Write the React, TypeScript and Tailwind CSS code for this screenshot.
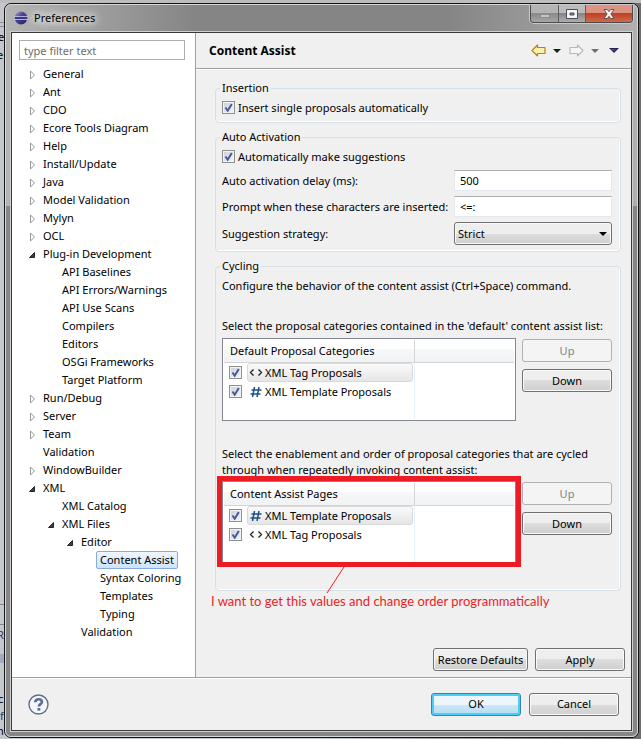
import { useState } from "react";
import type { ReactNode } from "react";
import clsx from "clsx";

type NodeState = "closed" | "open" | "leaf";

interface TreeNode {
  label: string;
  level: 0 | 1 | 2 | 3;
  state: NodeState;
}

const indents = ["pl-[14px]", "pl-[33px]", "pl-[52px]", "pl-[71px]"];

const tree: TreeNode[] = [
  { label: "General", level: 0, state: "closed" },
  { label: "Ant", level: 0, state: "closed" },
  { label: "CDO", level: 0, state: "closed" },
  { label: "Ecore Tools Diagram", level: 0, state: "closed" },
  { label: "Help", level: 0, state: "closed" },
  { label: "Install/Update", level: 0, state: "closed" },
  { label: "Java", level: 0, state: "closed" },
  { label: "Model Validation", level: 0, state: "closed" },
  { label: "Mylyn", level: 0, state: "closed" },
  { label: "OCL", level: 0, state: "closed" },
  { label: "Plug-in Development", level: 0, state: "open" },
  { label: "API Baselines", level: 1, state: "leaf" },
  { label: "API Errors/Warnings", level: 1, state: "leaf" },
  { label: "API Use Scans", level: 1, state: "leaf" },
  { label: "Compilers", level: 1, state: "leaf" },
  { label: "Editors", level: 1, state: "leaf" },
  { label: "OSGi Frameworks", level: 1, state: "leaf" },
  { label: "Target Platform", level: 1, state: "leaf" },
  { label: "Run/Debug", level: 0, state: "closed" },
  { label: "Server", level: 0, state: "closed" },
  { label: "Team", level: 0, state: "closed" },
  { label: "Validation", level: 0, state: "leaf" },
  { label: "WindowBuilder", level: 0, state: "closed" },
  { label: "XML", level: 0, state: "open" },
  { label: "XML Catalog", level: 1, state: "leaf" },
  { label: "XML Files", level: 1, state: "open" },
  { label: "Editor", level: 2, state: "open" },
  { label: "Content Assist", level: 3, state: "leaf" },
  { label: "Syntax Coloring", level: 3, state: "leaf" },
  { label: "Templates", level: 3, state: "leaf" },
  { label: "Typing", level: 3, state: "leaf" },
  { label: "Validation", level: 2, state: "leaf" },
];

const Twisty = ({ state }: { state: NodeState }) => (
  <svg className="w-3 h-3 mt-0.5 shrink-0" viewBox="0 0 12 12">
    {state === "closed" && (
      <path d="M4.5 2v8l4-4z" fill="#fff" stroke="#989898" />
    )}
    {state === "open" && (
      <path d="M8.5 3.5v5h-5z" fill="#404040" stroke="#262626" />
    )}
  </svg>
);

const Tree = () => {
  const [selected, setSelected] = useState(27);
  return (
    <ul className="mt-[5px]">
      {tree.map((node, i) => (
        <li key={i} className={clsx("flex items-center h-[18px]", indents[node.level])}>
          <Twisty state={node.state} />
          <button
            type="button"
            onClick={() => setSelected(i)}
            className={clsx(
              "ml-px h-[18px] px-[3px] border rounded-[2px] leading-4 whitespace-nowrap",
              i === selected
                ? "border-[#84acdd] bg-linear-to-b from-[#eff6fe] to-[#cfe3fb]"
                : "border-transparent"
            )}
          >
            {node.label}
          </button>
        </li>
      ))}
    </ul>
  );
};

const CheckBox = ({ id }: { id: string }) => (
  <span className="grid w-[13px] h-[13px] shrink-0">
    <input
      id={id}
      type="checkbox"
      defaultChecked
      className="peer col-start-1 row-start-1 appearance-none w-[13px] h-[13px] border border-[#8e8f8f] bg-linear-to-br from-[#cbcfd5] to-[#f6f6f6] shadow-[inset_0_0_0_1px_#f4f4f4]"
    />
    <svg
      className="col-start-1 row-start-1 pointer-events-none invisible peer-checked:visible"
      viewBox="0 0 13 13"
    >
      <path d="M3.5 6.5l2.2 3.2L9.8 3" fill="none" stroke="#44599a" strokeWidth="2" />
    </svg>
  </span>
);

const buttonBase =
  "h-[23px] border rounded-[3px] leading-4 text-center whitespace-nowrap";

const PushButton = ({
  children,
  className = "w-[90px]",
  disabled = false,
  primary = false,
}: {
  children: ReactNode;
  className?: string;
  disabled?: boolean;
  primary?: boolean;
}) => (
  <button
    type="button"
    disabled={disabled}
    className={clsx(
      buttonBase,
      className,
      disabled && "border-[#adb2b5] bg-[#f4f4f4] text-[#838383]",
      primary &&
        "border-[#3c7fb1] shadow-[inset_0_0_0_2px_#46d0f8] bg-linear-to-b from-[#ecf6fc] from-50% via-[#cfe8f8] via-50% to-[#b4dcf3]",
      !disabled &&
        !primary &&
        "border-[#707070] shadow-[inset_0_0_0_1px_#fafafa] bg-linear-to-b from-[#eeeeee] from-50% via-[#dddddd] via-50% to-[#cfcfcf]"
    )}
  >
    {children}
  </button>
);

const Group = ({ title, children }: { title: string; children: ReactNode }) => (
  <fieldset className="min-w-0 border border-[#d5dfe5] rounded-[4px] pl-1.5 pr-2 pb-1.5 shadow-[inset_0_-1px_0_#fff,inset_-1px_0_0_#fff]">
    <legend className="-ml-0.5 px-0.5 leading-4 bg-[#f0f0f0]">{title}</legend>
    {children}
  </fieldset>
);

const TagIcon = () => (
  <svg className="w-[14px] h-3 shrink-0" viewBox="0 0 14 12">
    <path
      d="M4.500 2.500L1.500 5.500l3 3M9.500 2.500l3 3-3 3"
      fill="none"
      stroke="#1c1c14"
      strokeWidth="1.3"
    />
  </svg>
);

const HashIcon = () => (
  <svg className="w-[14px] h-3 shrink-0" viewBox="0 0 14 12">
    <path
      d="M5.500 1L3.500 11M10 1L8 11M2.500 4h10M1.500 8h10"
      fill="none"
      stroke="#1d5288"
      strokeWidth="1.5"
    />
  </svg>
);

type Proposal = "tag" | "template";

const proposalNames = {
  tag: "XML Tag Proposals",
  template: "XML Template Proposals",
};

const ProposalTable = ({ title, rows }: { title: string; rows: Proposal[] }) => (
  <div className="border border-[#828790] bg-white p-px">
    <table className="w-full table-fixed border-separate border-spacing-0">
      <thead>
        <tr className="h-[23px]">
          <th className="w-[191px] p-0 pl-[6px] text-left font-normal border-b border-r border-[#d5d5d5] bg-linear-to-b from-white from-40% via-[#f7f8fa] via-40% to-[#f1f2f4]">
            {title}
          </th>
          <th
            aria-label="Details"
            className="p-0 border-b border-[#d5d5d5] bg-linear-to-b from-white from-40% via-[#f7f8fa] via-40% to-[#f1f2f4]"
          />
        </tr>
      </thead>
      <tbody>
        {rows.map((row, i) => (
          <tr key={row} className="h-[19px]">
            <td className="p-0 border-r border-[#e6f0fa]">
              <div className="flex items-center gap-[5px] pl-[5px] pr-px">
                <CheckBox id={`${title}-${row}`} />
                <label
                  htmlFor={`${title}-${row}`}
                  className={clsx(
                    "flex flex-1 items-center gap-0.5 h-[19px] border rounded-[3px] pl-px whitespace-nowrap",
                    i === 0
                      ? "border-[#d9d9d9] bg-linear-to-b from-[#fafafa] to-[#e6e6e6]"
                      : "border-transparent"
                  )}
                >
                  {row === "tag" ? <TagIcon /> : <HashIcon />}
                  {proposalNames[row]}
                </label>
              </div>
            </td>
            <td className="p-0" />
          </tr>
        ))}
        <tr className="h-[18px]">
          <td className="p-0 border-r border-[#e6f0fa]" />
          <td className="p-0" />
        </tr>
      </tbody>
    </table>
  </div>
);

const OrderButtons = () => (
  <div className="flex flex-col gap-[7px] pt-px">
    <PushButton disabled>Up</PushButton>
    <PushButton>Down</PushButton>
  </div>
);

const EclipseLogo = () => (
  <svg className="w-[14px] h-[14px]" viewBox="0 0 14 14">
    <defs>
      <linearGradient id="ball" x1="0" y1="0" x2="1" y2="1">
        <stop offset="0" stopColor="#b9a9dc" />
        <stop offset="0.4" stopColor="#4a4694" />
        <stop offset="1" stopColor="#211a55" />
      </linearGradient>
    </defs>
    <circle cx="7" cy="7" r="6.4" fill="url(#ball)" />
    <path d="M0 5.500h14M0 8.500h14" stroke="#c9cdf0" strokeWidth="0.8" />
    <path d="M1 7h12" stroke="#3b3786" strokeWidth="2" />
  </svg>
);

const TitleBar = () => (
  <div className="flex h-[26px] items-start">
    <div className="flex items-center gap-[6px] pl-[4px] pt-[4px]">
      <EclipseLogo />
      <h1 className="leading-[18px] [text-shadow:0_0_8px_#fff,0_0_8px_#fff,0_0_12px_#fff]">
        Preferences
      </h1>
    </div>
    <div className="ml-auto flex h-[18px] rounded-b-[4px] border border-t-0 border-[#4c4c4c] overflow-hidden shadow-[0_0_0_1px_#c8c8c8]">
      <button
        type="button"
        aria-label="Minimize"
        className="flex w-[28px] items-center justify-center border-r border-[#5c5c5c] bg-linear-to-b from-[#b4b4b4] from-50% via-[#8a8a8a] via-50% to-[#a6a6a6]"
      >
        <svg className="w-3 h-3" viewBox="0 0 12 12">
          <rect x="1.5" y="6.5" width="9" height="3" fill="#c6c6c6" stroke="#8a8a8a" />
        </svg>
      </button>
      <button
        type="button"
        aria-label="Maximize"
        className="flex w-[27px] items-center justify-center border-r border-[#5c5c5c] bg-linear-to-b from-[#bcbcbc] from-50% via-[#868686] via-50% to-[#aeaeae]"
      >
        <svg className="w-3 h-3" viewBox="0 0 12 12">
          <path
            d="M.5 1.5h11v9H.5zM4 5h4v2H4z"
            fill="#f4f4f4"
            fillRule="evenodd"
            stroke="#4a4d5c"
          />
        </svg>
      </button>
      <button
        type="button"
        aria-label="Close"
        className="flex w-[46px] items-center justify-center bg-linear-to-b from-[#dd9484] from-45% via-[#bd3a1f] via-45% to-[#d2694b]"
      >
        <svg className="w-3 h-3" viewBox="0 0 12 12">
          <path
            d="M1 1.5h3.3L6 3.7l1.7-2.2H11L7.9 6l3.1 4.5H7.7L6 8.3l-1.7 2.2H1L4.1 6z"
            fill="#f6f6f6"
            stroke="#5a4a52"
            strokeWidth="0.9"
          />
        </svg>
      </button>
    </div>
  </div>
);

const Caret = ({ className }: { className: string }) => (
  <svg className={clsx("w-2 h-1", className)} viewBox="0 0 8 4">
    <path d="M0 0h8L4 4z" fill="currentColor" />
  </svg>
);

const PageHeader = () => (
  <div className="flex h-[36px] items-center border-b border-[#a0a0a0] pl-[13px] pr-3 shadow-[0_1px_0_#fff]">
    <h2 className="font-bold text-[12px]">Content Assist</h2>
    <div className="ml-auto flex items-center">
      <button type="button" aria-label="Back">
        <svg className="w-[15px] h-[13px]" viewBox="0 0 15 13">
          <path
            d="M1 6.500L6.500 1v2.500h7.500v6H6.500V12z"
            fill="#fdf0a8"
            stroke="#b98114"
            strokeWidth="1.2"
            strokeLinejoin="round"
          />
        </svg>
      </button>
      <button type="button" aria-label="Back history" className="ml-[7px]">
        <Caret className="text-[#1c1c1c]" />
      </button>
      <button type="button" aria-label="Forward" className="ml-[8px]">
        <svg className="w-[15px] h-[13px]" viewBox="0 0 15 13">
          <path
            d="M14 6.500L8.500 1v2.500H1v6h7.500V12z"
            fill="#f5f5f1"
            stroke="#b9b9b4"
            strokeWidth="1.2"
            strokeLinejoin="round"
          />
        </svg>
      </button>
      <button type="button" aria-label="Forward history" className="ml-[7px]">
        <Caret className="text-[#707070]" />
      </button>
      <button type="button" aria-label="View menu" className="ml-[10px]">
        <svg className="w-[10px] h-[5px]" viewBox="0 0 10 5">
          <path d="M0 0h10L5 5z" fill="#26264e" />
          <path d="M2 1h5L4.5 3.5z" fill="#4a4494" />
        </svg>
      </button>
    </div>
  </div>
);

const textField =
  "h-[21px] w-full min-w-0 bg-white border border-[#e3e9ef] border-t-[#abadb3] pl-[5px] leading-4";

const ContentAssistPage = () => (
  <div className="flex flex-1 min-w-0 flex-col">
    <PageHeader />
    <div className="flex flex-1 flex-col gap-1.5 pt-[11px] pl-[19px] pr-[10px]">
      <Group title="Insertion">
        <div className="flex items-center gap-[3px] h-[17px] mt-[3px]">
          <CheckBox id="insert-single" />
          <label htmlFor="insert-single">Insert single proposals automatically</label>
        </div>
      </Group>

      <Group title="Auto Activation">
        <div className="flex items-center gap-[3px] h-[17px] mt-[3px]">
          <CheckBox id="auto-suggest" />
          <label htmlFor="auto-suggest">Automatically make suggestions</label>
        </div>
        <div className="grid grid-cols-[232px_1fr] items-center gap-y-[5px] mt-[5px]">
          <label htmlFor="delay">Auto activation delay (ms):</label>
          <input id="delay" type="text" defaultValue="500" className={textField} />
          <label htmlFor="prompt" className="whitespace-nowrap">
            Prompt when these characters are inserted:
          </label>
          <input id="prompt" type="text" defaultValue="<=:" className={textField} />
          <label htmlFor="strategy">Suggestion strategy:</label>
          <div className="relative">
            <select
              id="strategy"
              className="block w-full h-[23px] appearance-none border border-[#707070] rounded-[3px] pl-[3px] leading-4 shadow-[inset_0_0_0_1px_#fafafa] bg-linear-to-b from-[#eeeeee] from-50% via-[#dddddd] via-50% to-[#cfcfcf]"
            >
              <option>Strict</option>
            </select>
            <Caret className="absolute right-[5px] top-[10px] pointer-events-none text-black" />
          </div>
        </div>
      </Group>

      <Group title="Cycling">
        <p className="mt-1 whitespace-nowrap">
          Configure the behavior of the content assist (Ctrl+Space) command.
        </p>
        <p className="mt-6 whitespace-nowrap">
          Select the proposal categories contained in the 'default' content assist list:
        </p>
        <div className="mt-1 flex gap-1.5">
          <div className="flex-1 min-w-0">
            <ProposalTable title="Default Proposal Categories" rows={["tag", "template"]} />
          </div>
          <OrderButtons />
        </div>
        <p className="mt-[25px] whitespace-nowrap">
          Select the enablement and order of proposal categories that are cycled
          <br />
          through when repeatedly invoking content assist:
        </p>
        <div className="mt-[3px] mb-5 flex gap-1.5">
          <div className="relative flex-1 min-w-0">
            <ProposalTable title="Content Assist Pages" rows={["template", "tag"]} />
            <div className="absolute -top-[5px] -bottom-[3px] -inset-x-[5px] border-[5px] border-[#ed1c24] pointer-events-none" />
            <svg
              className="absolute left-[104px] top-full mt-[3px] w-[20px] h-[27px]"
              viewBox="0 0 20 27"
            >
              <path d="M18 0L1 26" stroke="#ed1c24" fill="none" />
            </svg>
          </div>
          <OrderButtons />
        </div>
      </Group>

      <p className="-mt-1 -ml-1 font-[Lato,sans-serif] text-[13px] leading-4 text-[#ed1c24] whitespace-nowrap">
        I want to get this values and change order programmatically
      </p>
    </div>
    <div className="flex justify-end gap-[7px] pr-1.5 pb-1.5">
      <PushButton className="w-[95px]">Restore Defaults</PushButton>
      <PushButton>Apply</PushButton>
    </div>
  </div>
);

const Footer = () => (
  <div className="flex items-center h-[53px] border-t border-[#a0a0a0] pl-[16px] pr-[12px] shadow-[inset_0_1px_0_#fff]">
    <button type="button" aria-label="Help">
      <svg className="w-[21px] h-[21px]" viewBox="0 0 21 21">
        <circle cx="10.5" cy="10.5" r="9.5" fill="#f4f6f9" stroke="#5d6f8e" strokeWidth="1.4" />
        <path
          d="M7.2 8.200c0-2 1.400-3 3.400-3s3.300 1 3.300 2.700c0 2.300-3 2.200-3 4.600"
          fill="none"
          stroke="#5d6f8e"
          strokeWidth="2.6"
        />
        <rect x="9.500" y="14" width="2.800" height="2.600" fill="#5d6f8e" />
      </svg>
    </button>
    <div className="ml-auto flex gap-2">
      <PushButton primary>OK</PushButton>
      <PushButton>Cancel</PushButton>
    </div>
  </div>
);

// slivers of the editor window that sits behind the dialog
const Backdrop = () => (
  <div aria-hidden="true" className="absolute inset-0 overflow-hidden bg-linear-to-r from-[#c4c7cb] from-50% to-[#6e6e6e]">
    <div className="absolute inset-x-0 top-0 h-[3px] bg-[#bdbdbd]" />
    <div className="absolute left-0 top-[22px] h-[5px] w-1 border-y border-[#8a8d96]" />
    <div className="absolute left-0 top-[604px] h-[21px] w-1 border-y border-[#85878c]" />
    <div className="absolute left-0 top-[654px] h-[9px] w-1 bg-[#a3abc4]" />
    <span className="absolute -left-0.5 top-[29px]">e</span>
    <span className="absolute -left-[3px] top-[47px]">e</span>
    <span className="absolute -left-[3px] top-[627px] text-[#1d3d6b]">R</span>
    <span className="absolute -left-0.5 top-[691px]">c</span>
    <span className="absolute left-0 top-[708px] text-[#1d3d6b]">f</span>
    <span className="absolute -left-[3px] top-[723px]">n</span>
  </div>
);

export default function App() {
  return (
    <div className="relative flex min-h-screen flex-col pt-[3px] pb-px pl-1 pr-0.5 font-[Noto_Sans,sans-serif] text-[11px] leading-4 text-black">
      <Backdrop />
      <div className="relative flex flex-1 flex-col border border-[#141414] rounded-[7px] bg-[#868686]">
        <div className="flex flex-1 flex-col border border-[#d8d8d8] rounded-[6px] px-1 pb-1 bg-[linear-gradient(to_bottom,transparent_201px,#868686_201px),linear-gradient(to_right,#b4b4b4,#858585_30%,#858585_70%,#b0b0b0)]">
          <TitleBar />
          <div className="flex flex-1 flex-col border border-[#d0d0d0]">
            <div className="flex flex-1 flex-col border border-[#3a3a3a] bg-[#f0f0f0]">
              <div className="flex flex-1">
                <div className="w-[184px] shrink-0 bg-white border-r border-[#a0a0a0] pt-[7px]">
                  <input
                    type="text"
                    aria-label="Filter"
                    placeholder="type filter text"
                    className="block ml-[7px] w-[166px] h-5 border border-[#abadb3] pl-1 leading-4 placeholder:text-[#6d6d6d]"
                  />
                  <Tree />
                </div>
                <ContentAssistPage />
              </div>
              <Footer />
            </div>
          </div>
        </div>
      </div>
    </div>
  );
}
